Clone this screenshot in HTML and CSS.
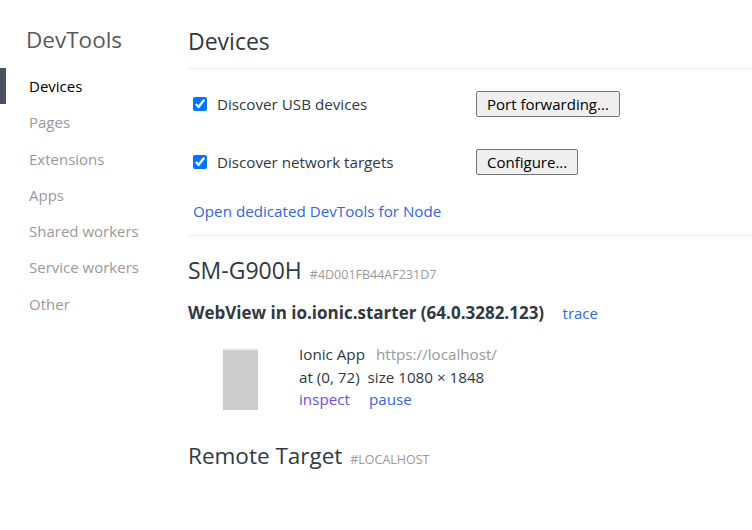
FILE: index.html
```html
<!DOCTYPE html>
<html>
<head>
<meta charset="utf-8">
<link rel="stylesheet" href="styles.css">
</head>
<body>
<div class="app">
  <nav class="sidebar">
    <div class="brand">DevTools</div>
    <ul class="nav">
      <li class="nav-item active">Devices</li>
      <li class="nav-item">Pages</li>
      <li class="nav-item">Extensions</li>
      <li class="nav-item">Apps</li>
      <li class="nav-item">Shared workers</li>
      <li class="nav-item">Service workers</li>
      <li class="nav-item">Other</li>
    </ul>
  </nav>
  <main class="content">
    <h1 class="page-title">Devices</h1>
    <section class="options">
      <div class="opt-row">
        <label class="check"><input type="checkbox" checked><span>Discover USB devices</span></label>
        <button class="btn">Port forwarding...</button>
      </div>
      <div class="opt-row">
        <label class="check"><input type="checkbox" checked><span>Discover network targets</span></label>
        <button class="btn">Configure...</button>
      </div>
      <div class="link-row"><a class="link" href="#">Open dedicated DevTools for Node</a></div>
    </section>
    <section class="device">
      <h2 class="device-name">SM-G900H <span class="serial">#4D001FB44AF231D7</span></h2>
      <div class="browser">WebView in io.ionic.starter (64.0.3282.123) <a class="link trace" href="#">trace</a></div>
      <div class="target">
        <div class="thumb"></div>
        <div class="target-info">
          <div><span class="t-name">Ionic App</span><span class="t-url">https://localhost/</span></div>
          <div>at (0, 72)&nbsp; size 1080 × 1848</div>
          <div class="actions"><a class="link visited" href="#">inspect</a><a class="link" href="#">pause</a></div>
        </div>
      </div>
    </section>
    <section class="device remote">
      <h2 class="device-name remote-name">Remote Target <span class="serial">#LOCALHOST</span></h2>
    </section>
  </main>
</div>
</body>
</html>
```

FILE: styles.css
```css
* { box-sizing: border-box; }
html, body { margin: 0; padding: 0; background: #fff; }
body {
  font-family: "Open Sans", "Noto Sans", sans-serif;
  font-size: 15.2px;
  color: #303942;
  width: 752px;
  height: 530px;
  overflow: hidden;
}
.app { display: flex; }
.sidebar { width: 188px; flex: none; }
.brand {
  font-size: 22.5px;
  color: #5a5a5a;
  padding: 23px 0 0 26px;
  height: 68px;
  line-height: 34px;
}
.nav { list-style: none; margin: 0; padding: 0; }
.nav-item {
  height: 36.3px;
  line-height: 36px;
  padding-left: 29px;
  color: #999;
  font-size: 15px;
  border-left: 6px solid transparent;
  text-indent: -6px;
}
.nav-item.active { color: #000; border-left-color: #4a5260; }
.content { flex: 1; min-width: 0; }
.page-title {
  margin: 0;
  font-weight: normal;
  font-size: 23px;
  color: #303942;
  padding-top: 24px;
  line-height: 34px;
  height: 69px;
  border-bottom: 1px solid #eee;
}
.options { padding-top: 6px; border-bottom: 1px solid #eee; height: 167px; }
.opt-row {
  display: grid;
  grid-template-columns: 288px auto;
  align-items: center;
  height: 58px;
}
.check { display: flex; align-items: center; padding-left: 5px; }
.check input {
  margin: 0 10px 0 0;
  width: 14px;
  height: 14px;
  accent-color: #0075ff;
}
.btn {
  justify-self: start;
  font-family: inherit;
  font-size: 15px;
  color: #000;
  background: #efefef;
  border: 1px solid #767676;
  border-radius: 2px;
  height: 26px;
  padding: 0 10px;
  line-height: 22px;
}
.link-row { padding-left: 5px; height: 40px; line-height: 40px; }
.link { color: #3367d6; text-decoration: none; }
.link.visited { color: #6b4fd6; }
.device { padding-top: 19px; }
.device-name {
  margin: 0;
  font-weight: normal;
  font-size: 23px;
  line-height: 30px;
  color: #303942;
}
.remote-name { font-size: 22.5px; }
.serial { font-size: 12.5px; color: #999; margin-left: 2px; }
.browser {
  margin-top: 11px;
  font-weight: bold;
  font-size: 17px;
  line-height: 24px;
}
.trace { font-weight: normal; margin-left: 14px; font-size: 15px; }
.target { display: flex; margin-top: 18px; }
.thumb {
  width: 35px;
  height: 62px;
  margin: 5px 41px 0 35px;
  background: #ccc;
  border-top: 2px solid #eee;
}
.target-info { line-height: 22.5px; }
.t-url { color: #999; margin-left: 11px; }
.actions .link + .link { margin-left: 19px; }
.remote { padding-top: 30px; }
```
